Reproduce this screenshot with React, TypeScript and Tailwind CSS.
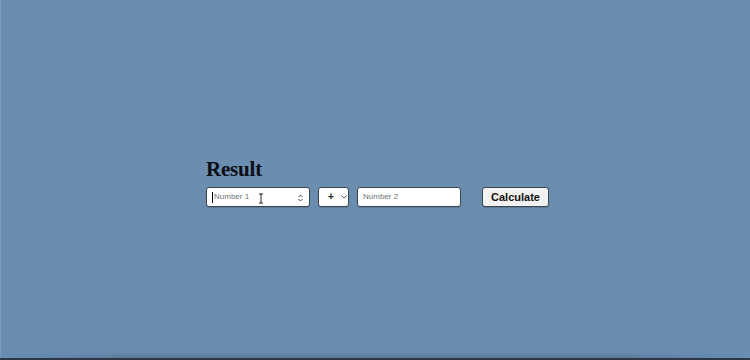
import React from "react";

export default function App() {
  return (
    <div className="relative w-[750px] h-[360px] overflow-hidden bg-[#6a8db0]">
      <div className="absolute left-0 top-0 h-full w-[1px] bg-[#7a9bbd]" />
      <div className="flex flex-col pt-[156px] pl-[206px]">
        <h1 className="text-[21px] leading-[26px] font-bold text-[#0b0f14] [font-family:'Liberation_Serif',serif] tracking-[-0.2px]">
          Result
        </h1>
        <div className="mt-[5px] flex items-center [font-family:'Liberation_Sans',Arial,sans-serif]">
          <div className="relative flex h-[20px] w-[104px] items-center rounded-[3px] border border-[#3d4650] bg-white pl-[5px] shadow-[0_1px_1px_rgba(0,0,0,0.15)]">
            <span className="h-[11px] w-[1px] bg-black" />
            <span className="ml-[1px] text-[8px] text-[#6e737a]">Number 1</span>
            <svg className="absolute left-[51px] top-[5px]" width="6" height="11" viewBox="0 0 6 11">
              <path d="M1 1h4M3 1v9M1 10h4" stroke="#222" strokeWidth="1" fill="none" />
            </svg>
            <svg className="absolute right-[6px] top-[6px]" width="5" height="8" viewBox="0 0 5 8">
              <path d="M0.5 3L2.5 1L4.5 3M0.5 5L2.5 7L4.5 5" stroke="#444" strokeWidth="1" fill="none" />
            </svg>
          </div>
          <div className="ml-[8px] flex h-[20px] w-[31px] items-center rounded-[3px] border border-[#3d4650] bg-white pl-[9px] shadow-[0_1px_1px_rgba(0,0,0,0.15)]">
            <span className="text-[10px] font-bold leading-none text-[#222]">+</span>
            <svg className="ml-[7px]" width="6" height="4" viewBox="0 0 6 4">
              <path d="M0.5 0.5L3 3L5.5 0.5" stroke="#555" strokeWidth="1" fill="none" />
            </svg>
          </div>
          <div className="ml-[8px] flex h-[20px] w-[104px] items-center rounded-[3px] border border-[#3d4650] bg-white pl-[5px] shadow-[0_1px_1px_rgba(0,0,0,0.15)]">
            <span className="text-[8px] text-[#6e737a]">Number 2</span>
          </div>
          <button className="ml-[21px] flex h-[20px] w-[67px] items-center justify-center rounded-[3px] border border-[#3d4650] bg-[#f2f2f2] text-[11px] font-bold text-[#111] shadow-[0_1px_1px_rgba(0,0,0,0.15)]">
            Calculate
          </button>
        </div>
      </div>
      <div className="absolute bottom-0 left-0 h-[8px] w-full bg-[linear-gradient(to_bottom,rgba(0,0,0,0),rgba(40,55,70,0.35))] [mask-image:linear-gradient(to_right,transparent,black_20%,black_80%,transparent)]" />
      <div className="absolute bottom-0 left-0 h-[2px] w-full bg-[#2a3848]" />
    </div>
  );
}
